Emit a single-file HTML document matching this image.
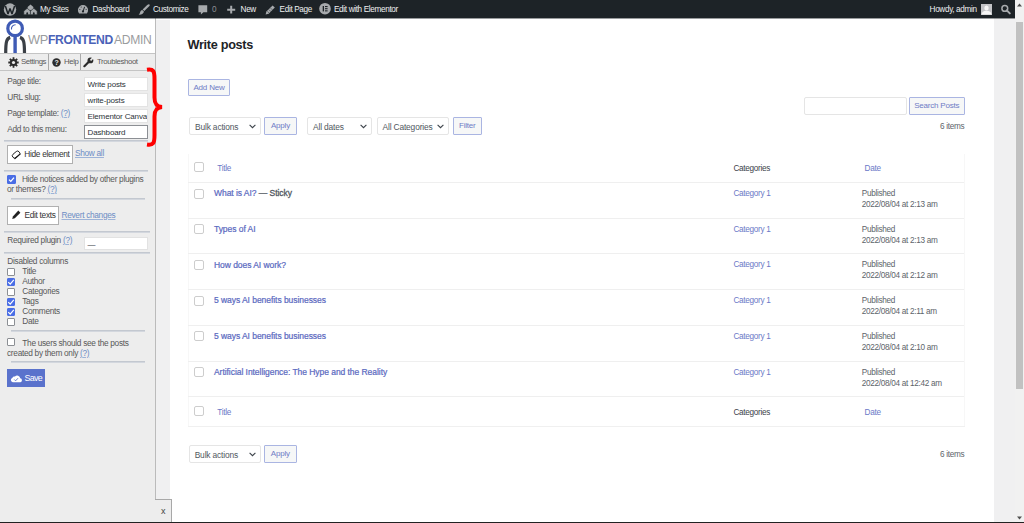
<!DOCTYPE html>
<html><head><meta charset="utf-8">
<style>
*{box-sizing:border-box}
html,body{margin:0;padding:0}
body{width:1024px;height:523px;overflow:hidden;position:relative;background:#f0f0f1;font-family:"Liberation Sans",sans-serif;color:#3c434a}
.a{position:absolute;white-space:nowrap}
#bar{left:0;top:0;width:1015px;height:18px;background:#1d2327;color:#eeeff0;font-size:8.2px;letter-spacing:-0.35px}
#bar .t{top:4.8px;line-height:9px}
#sb{left:1015px;top:0;width:9px;height:522px;background:#f1f1f1}
#bot{left:0;top:522px;width:1024px;height:1px;background:#222}
#side{left:0;top:18px;width:156px;height:504px;background:#ededed;border-right:1px solid #bbb;font-size:8.3px;letter-spacing:-0.3px;color:#585858}
#content{left:170px;top:18px;width:824px;height:504px;background:#fff}
.sep{position:absolute;height:2px;background:linear-gradient(#c3c8d0 50%,#d3d7de 50%)}
.inp{position:absolute;background:#fff;border:1px solid #e3e3e3;font-size:8px;letter-spacing:-0.15px;padding-left:3px;padding-top:1px;line-height:12px;color:#2c3338}
.cb{position:absolute;width:8px;height:8px;border:1px solid #8c8f94;background:#fff;border-radius:1px}
.cbc{background:#4a6de5;border-color:#4a6de5}
.lnk{color:#6c8cc4;text-decoration:underline;text-decoration-color:#9db3d8;text-decoration-thickness:0.7px;text-underline-offset:1px}
.btn{position:absolute;background:#fff;border:1px solid #b0b0b0}
#main{font-size:8.2px;letter-spacing:-0.3px;color:#5d646a}
.mbtn{position:absolute;background:#f6f7f7;border:1px solid #aab5e2;color:#6f7cc6;text-align:center;font-size:8px;letter-spacing:-0.2px;border-radius:1px;padding-top:1px}
.sel{position:absolute;background:#fff;border:1px solid #e5e5e5;border-radius:2px;font-size:8.4px;letter-spacing:-0.15px;color:#50575e}
.row{position:absolute;left:188px;width:776px;border-top:1px solid #efefef}
.tt{color:#5b6abf;font-weight:400;font-size:8.5px;letter-spacing:-0.05px;-webkit-text-stroke:0.22px #5b6abf}
.cat{color:#6b79c7}
.tcb{position:absolute;width:10px;height:10px;border:1px solid #cdcdcd;border-radius:2px;background:#fff}
</style></head><body>

<!-- admin bar -->
<div id="bar" class="a">
  <svg class="a" style="left:0;top:0" width="420" height="18" viewBox="0 0 420 18">
    <g fill="#a7aaad">
      <circle cx="10" cy="9.55" r="6.2"/>
      <path d="M5.4 6L8 14 10 8.4 12 14 14.6 6" fill="none" stroke="#1d2327" stroke-width="1.5" stroke-linejoin="bevel"/>
      <path d="M30.5 4.5L33.4 7.1V10H27.6V7.1z"/>
      <path d="M27.2 8.3L30.6 11.1V14.7H23.8V11.1z" stroke="#1d2327" stroke-width="0.6"/>
      <path d="M33.8 8.3L37.2 11.1V14.7H30.4V11.1z" stroke="#1d2327" stroke-width="0.6"/>
      <path d="M26.3 14.8V13.2A0.9 0.9 0 0 1 28.1 13.2V14.8zM32.9 14.8V13.2A0.9 0.9 0 0 1 34.7 13.2V14.8z" fill="#1d2327"/>
      <path d="M79.1 13.4A5.1 5.1 0 1 1 86.9 13.4z"/>
      <path d="M83 11.6L84.6 6.8" stroke="#1d2327" stroke-width="1"/>
      <circle cx="83" cy="11.4" r="1.1" fill="#1d2327"/>
      <circle cx="79.9" cy="9.6" r="0.5" fill="#1d2327"/><circle cx="81.2" cy="7" r="0.5" fill="#1d2327"/><circle cx="86.1" cy="9.6" r="0.5" fill="#1d2327"/>
      <path d="M149.4 4.4C150.1 4.9 149.7 5.8 148.9 6.6L144.3 11.1 142.6 9.6 147.2 5C148 4.3 148.9 4 149.4 4.4z"/>
      <path d="M142.2 10.1L143.9 11.6C143.7 13.5 141.9 14.9 138.6 14.7 139.6 13.9 139.8 12.9 140.2 11.9 140.6 11 141.3 10.3 142.2 10.1z"/>
      <path d="M198.4 5.3h8.8v7h-3.8l-2.5 2.3v-2.3h-2.5z"/>
      <path d="M230.2 5.7h2v3h3v2h-3v2.9h-2v-2.9h-3v-2h3z"/>
      <path d="M272.6 5.4l2.2 2.2-6.1 6.1-3.1.8.8-3.1z"/>
      <path d="M267.4 11.3l1.8 1.8M269 9.7l1.8 1.8M270.6 8.1l1.8 1.8" stroke="#1d2327" stroke-width="0.5"/>
      <circle cx="325" cy="8.7" r="5.8"/>
      <rect x="322.7" y="6" width="1.3" height="5.4" fill="#1d2327"/>
      <rect x="325" y="6" width="2.6" height="1.1" fill="#1d2327"/><rect x="325" y="8.15" width="2.6" height="1.1" fill="#1d2327"/><rect x="325" y="10.3" width="2.6" height="1.1" fill="#1d2327"/>
    </g>
  </svg>
  <span class="a t" style="left:40px">My Sites</span>
  <span class="a t" style="left:92.5px">Dashboard</span>
  <span class="a t" style="left:153px">Customize</span>
  <span class="a t" style="left:212px;color:#8c8f94">0</span>
  <span class="a t" style="left:240.6px">New</span>
  <span class="a t" style="left:279.6px">Edit Page</span>
  <span class="a t" style="left:334px">Edit with Elementor</span>
  <span class="a t" style="left:929.6px">Howdy, admin</span>
  <div class="a" style="left:981px;top:4px;width:11px;height:10.5px;background:#c3c4c7;overflow:hidden"><svg width="11" height="10.5" viewBox="0 0 11 10.5"><ellipse cx="5.5" cy="4" rx="2.2" ry="2.5" fill="#f6f6f6"/><path d="M0.5 10.5c0-2.3 2-3.7 5-3.7s5 1.4 5 3.7z" fill="#f6f6f6"/></svg></div>
  <svg class="a" style="left:1000px;top:4px" width="12" height="11" viewBox="0 0 12 11"><circle cx="4.8" cy="4.4" r="2.9" fill="none" stroke="#a7aaad" stroke-width="1.5"/><path d="M6.8 6.4l3 3" stroke="#a7aaad" stroke-width="2" stroke-linecap="round"/></svg>
</div>

<!-- scrollbar -->
<div id="sb" class="a">
  <svg class="a" style="left:2px;top:3px" width="5" height="4" viewBox="0 0 5 4"><path d="M0 3.5L2.5 0.5 5 3.5z" fill="#505050"/></svg>
  <div class="a" style="left:1px;top:22px;width:7px;height:367px;background:#c1c1c1"></div>
  <svg class="a" style="left:2px;top:516px" width="5" height="4" viewBox="0 0 5 4"><path d="M0 0.5L2.5 3.5 5 0.5z" fill="#505050"/></svg>
</div>

<!-- sidebar -->
<div id="side" class="a">
  <div class="a" style="left:0;top:0;width:155px;height:35.5px;background:#fff"></div>
  <svg class="a" style="left:3px;top:1px" width="25" height="35" viewBox="0 0 25 35">
    <circle cx="12.1" cy="9.4" r="7.3" fill="none" stroke="#3f5bb5" stroke-width="3.2"/>
    <path d="M8.5 10.5A4 4 0 0 1 12.6 5.8" fill="none" stroke="#3f5bb5" stroke-width="1.1"/>
    <rect x="10.4" y="16" width="3.4" height="18.4" fill="#3f5bb5"/>
    <path d="M7.2 18.4C3.6 19.4 2.7 22.5 2.7 34.4" fill="none" stroke="#3b4046" stroke-width="3.2"/>
    <path d="M17 18.4C20.6 19.4 21.5 22.5 21.5 34.4" fill="none" stroke="#3b4046" stroke-width="3.2"/>
  </svg>
  <span class="a" style="left:28px;top:15.5px;font-size:12.3px;line-height:13px;color:#9a9c9e;transform-origin:0 0;transform:scaleX(1.04)">WP</span><span class="a" style="left:48.4px;top:15.5px;font-size:12.3px;line-height:13px;color:#4a62b8;font-weight:700;transform-origin:0 0;transform:scaleX(0.985)">FRONTEND</span><span class="a" style="left:113.6px;top:15.5px;font-size:12.3px;line-height:13px;color:#9a9c9e;transform-origin:0 0;transform:scaleX(0.985)">ADMIN</span>
  <!-- tabs -->
  <div class="a" style="left:0;top:35px;width:155px;height:1px;background:#c4c4c4"></div>
  <div class="a" style="left:48px;top:36px;width:1px;height:17px;background:#a9a9a9"></div>
  <div class="a" style="left:80px;top:36px;width:1px;height:17px;background:#a9a9a9"></div>
  <svg class="a" style="left:7.5px;top:39px" width="11" height="11" viewBox="0 0 11 11"><g fill="#2c2c2c"><circle cx="5.5" cy="5.5" r="3.6"/><g stroke="#2c2c2c" stroke-width="1.8"><path d="M5.5 0.3v10.4M0.3 5.5h10.4M1.8 1.8l7.4 7.4M9.2 1.8l-7.4 7.4"/></g></g><circle cx="5.5" cy="5.5" r="1.6" fill="#ededed"/></svg>
  <span class="a" style="left:21px;top:39px;font-size:7.8px;letter-spacing:-0.38px;line-height:9px;color:#5a5a5a">Settings</span>
  <svg class="a" style="left:51.6px;top:39.5px" width="9" height="9" viewBox="0 0 9 9"><circle cx="4.5" cy="4.5" r="4.2" fill="#2c2c2c"/><text x="4.5" y="7.3" font-size="7" font-weight="700" font-family="Liberation Sans" text-anchor="middle" fill="#ededed">?</text></svg>
  <span class="a" style="left:64px;top:39px;font-size:7.8px;letter-spacing:-0.38px;line-height:9px;color:#5a5a5a">Help</span>
  <svg class="a" style="left:83px;top:38.5px" width="11" height="11" viewBox="0 0 11 11"><path d="M1.4 9.2L5.6 5" stroke="#2c2c2c" stroke-width="2.2" stroke-linecap="round"/><circle cx="7.4" cy="3.4" r="2.9" fill="#2c2c2c"/><path d="M6.9 2.7L8.1 3.9 11.2 0.8 10 -0.4z" fill="#ededed"/></svg>
  <span class="a" style="left:97px;top:39px;font-size:7.8px;letter-spacing:-0.38px;line-height:9px;color:#5a5a5a">Troubleshoot</span>
  <div class="a" style="left:0;top:52px;width:155px;height:1px;background:#c4c4c4"></div>

  <!-- form rows -->
  <span class="a" style="left:7.2px;top:59px;line-height:9px">Page title:</span>
  <span class="a" style="left:7.2px;top:75px;line-height:9px">URL slug:</span>
  <span class="a" style="left:7.2px;top:90.5px;line-height:9px">Page template: <span class="lnk">(?)</span></span>
  <span class="a" style="left:7.2px;top:106.5px;line-height:9px">Add to this menu:</span>
  <div class="inp" style="left:83.5px;top:59px;width:64px;height:13.5px">Write posts</div>
  <div class="inp" style="left:83.5px;top:75px;width:64px;height:13.5px">write-posts</div>
  <div class="inp" style="left:83.5px;top:91px;width:64px;height:14px;overflow:hidden">Elementor Canvas</div>
  <div class="inp" style="left:83.5px;top:106.5px;width:64px;height:14.5px;border-color:#8c8f94">Dashboard</div>
  <div class="sep" style="left:4px;top:121.5px;width:144px"></div>

  <div class="btn" style="left:7px;top:127px;width:66px;height:19px"></div>
  <svg class="a" style="left:10px;top:131px" width="12" height="12" viewBox="0 0 12 12"><g transform="rotate(-40 6 5.5)"><rect x="1.9" y="3.4" width="8.2" height="4.4" rx="2" fill="#fff" stroke="#1a1a1a" stroke-width="0.9"/><path d="M2.6 7.9h6.8" stroke="#1a1a1a" stroke-width="1.2" stroke-linecap="round"/></g></svg>
  <span class="a" style="left:24.3px;top:132px;line-height:9px;color:#333">Hide element</span>
  <span class="a lnk" style="left:75px;top:131px;line-height:9px">Show all</span>
  <div class="sep" style="left:4px;top:151.5px;width:144px"></div>

  <div class="cb cbc" style="left:7px;top:157px;width:8.5px;height:8.5px"></div>
  <svg class="a" style="left:8px;top:158px" width="7" height="7" viewBox="0 0 7 7"><path d="M1 3.6l1.8 1.8L6 1.6" fill="none" stroke="#fff" stroke-width="1.3"/></svg>
  <span class="a" style="left:21.9px;top:157px;line-height:9px">Hide notices added by other plugins</span>
  <span class="a" style="left:7px;top:167px;line-height:9px">or themes? <span class="lnk">(?)</span></span>
  <div class="sep" style="left:11px;top:180px;width:133.5px"></div>

  <div class="btn" style="left:7px;top:188px;width:52px;height:19px"></div>
  <svg class="a" style="left:11.5px;top:192px" width="9" height="10" viewBox="0 0 9 10"><path d="M6.3 0.6l2.1 2.1-5.6 5.6-2.6.7.7-2.6z" fill="#222"/></svg>
  <span class="a" style="left:24.5px;top:193px;line-height:9px;color:#333">Edit texts</span>
  <span class="a lnk" style="left:61.5px;top:192.5px;line-height:9px">Revert changes</span>
  <div class="sep" style="left:4px;top:212.5px;width:146px"></div>

  <span class="a" style="left:7.3px;top:218px;line-height:9px">Required plugin <span class="lnk">(?)</span></span>
  <div class="inp" style="left:83.5px;top:218.5px;width:64px;height:13.5px;border-color:#e2e2e2">—</div>
  <div class="sep" style="left:4px;top:233.5px;width:146px"></div>

  <span class="a" style="left:7.3px;top:239px;line-height:9px">Disabled columns</span>
  <div class="cb" style="left:7.2px;top:249.5px"></div><span class="a" style="left:22.2px;top:249px;line-height:9px">Title</span>
  <div class="cb cbc" style="left:7.2px;top:259.5px"></div><svg class="a" style="left:7.2px;top:259.8px" width="8" height="8" viewBox="0 0 8 8"><path d="M1.3 4.2l1.9 1.9L6.8 1.9" fill="none" stroke="#fff" stroke-width="1.2"/></svg><span class="a" style="left:22.2px;top:259px;line-height:9px">Author</span>
  <div class="cb" style="left:7.2px;top:269.5px"></div><span class="a" style="left:22.2px;top:269px;line-height:9px">Categories</span>
  <div class="cb cbc" style="left:7.2px;top:279.5px"></div><svg class="a" style="left:7.2px;top:279.8px" width="8" height="8" viewBox="0 0 8 8"><path d="M1.3 4.2l1.9 1.9L6.8 1.9" fill="none" stroke="#fff" stroke-width="1.2"/></svg><span class="a" style="left:22.2px;top:279px;line-height:9px">Tags</span>
  <div class="cb cbc" style="left:7.2px;top:289.5px"></div><svg class="a" style="left:7.2px;top:289.8px" width="8" height="8" viewBox="0 0 8 8"><path d="M1.3 4.2l1.9 1.9L6.8 1.9" fill="none" stroke="#fff" stroke-width="1.2"/></svg><span class="a" style="left:22.2px;top:289px;line-height:9px">Comments</span>
  <div class="cb" style="left:7.2px;top:299.5px"></div><span class="a" style="left:22.2px;top:299px;line-height:9px">Date</span>
  <div class="sep" style="left:11px;top:312px;width:133.5px"></div>

  <div class="cb" style="left:7.3px;top:320px"></div>
  <span class="a" style="left:22.3px;top:320.8px;line-height:9px">The users should see the posts</span>
  <span class="a" style="left:7px;top:330.8px;line-height:9px">created by them only <span class="lnk">(?)</span></span>
  <div class="sep" style="left:11px;top:343px;width:133.5px"></div>

  <div class="a" style="left:7px;top:351px;width:38px;height:18.2px;background:#5a72cc"></div>
  <svg class="a" style="left:10px;top:356px" width="12" height="9" viewBox="0 0 12 9"><path d="M2.8 8.3A2.3 2.3 0 0 1 2.3 3.9 2.4 2.4 0 0 1 5 2.6 3 3 0 0 1 10.2 4.3 2 2 0 0 1 9.5 8.3z" fill="#fff"/><path d="M4.3 5.5l1.3 1.3 2.4-2.6" fill="none" stroke="#5a72cc" stroke-width="0.9"/></svg>
  <span class="a" style="left:24.6px;top:355.5px;line-height:9px;color:#fff;font-size:8.9px;letter-spacing:-0.75px">Save</span>
</div>
<!-- content -->
<div id="content" class="a"></div>
<div id="main">
  <span class="a" style="left:187.5px;top:36.6px;font-size:12.7px;line-height:16px;font-weight:700;color:#1d2327">Write posts</span>
  <div class="mbtn" style="left:188px;top:79px;width:42px;height:16.5px;line-height:14.5px">Add New</div>
  <div class="sel" style="left:189px;top:117px;width:72px;height:18px"><span class="a" style="left:5px;top:3.5px;line-height:10px">Bulk actions</span><svg class="a" style="right:4px;top:6px" width="7" height="5" viewBox="0 0 7 5"><path d="M0.6 0.8L3.5 3.7 6.4 0.8" fill="none" stroke="#3c434a" stroke-width="1.1"/></svg></div>
  <div class="mbtn" style="left:264px;top:117px;width:33px;height:18px;line-height:14.5px">Apply</div>
  <div class="sel" style="left:307px;top:117px;width:65px;height:18px"><span class="a" style="left:5px;top:3.5px;line-height:10px">All dates</span><svg class="a" style="right:4px;top:6px" width="7" height="5" viewBox="0 0 7 5"><path d="M0.6 0.8L3.5 3.7 6.4 0.8" fill="none" stroke="#3c434a" stroke-width="1.1"/></svg></div>
  <div class="sel" style="left:376.5px;top:117px;width:72px;height:18px"><span class="a" style="left:5px;top:3.5px;line-height:10px">All Categories</span><svg class="a" style="right:4px;top:6px" width="7" height="5" viewBox="0 0 7 5"><path d="M0.6 0.8L3.5 3.7 6.4 0.8" fill="none" stroke="#3c434a" stroke-width="1.1"/></svg></div>
  <div class="mbtn" style="left:452.5px;top:117px;width:29.5px;height:18px;line-height:14.5px">Filter</div>
  <div class="sel" style="left:803.5px;top:97px;width:103px;height:17.5px"></div>
  <div class="mbtn" style="left:909px;top:97px;width:55.5px;height:17.5px;line-height:13.5px">Search Posts</div>
  <span class="a" style="left:940px;top:122px;line-height:10px">6 items</span>
  <div class="a" style="left:188px;top:154px;width:776.5px;height:272px;border:1px solid #f7f7f7;border-top:0;border-bottom:0"></div>
  <div class="tcb" style="left:194px;top:162px"></div>
  <span class="a cat" style="left:217.3px;top:164px;line-height:10px">Title</span>
  <span class="a" style="left:733.4px;top:164px;line-height:10px;color:#3c434a">Categories</span>
  <span class="a cat" style="left:864.6px;top:164px;line-height:10px">Date</span>
  <div class="row" style="top:182px;height:36px"></div>
  <div class="tcb" style="left:194px;top:188.5px"></div>
  <span class="a tt" style="left:214px;top:188.2px;line-height:10px">What is AI?<span style="color:#50575e;-webkit-text-stroke:0.3px #50575e"> — Sticky</span></span>
  <span class="a cat" style="left:733.4px;top:189px;line-height:10px">Category 1</span>
  <span class="a" style="left:861.8px;top:189px;line-height:10px">Published</span>
  <span class="a" style="left:861.8px;top:200px;line-height:10px">2022/08/04 at 2:13 am</span>
  <div class="row" style="top:217.7px;height:36px"></div>
  <div class="tcb" style="left:194px;top:224.2px"></div>
  <span class="a tt" style="left:214px;top:223.9px;line-height:10px">Types of AI<span style="color:#50575e"></span></span>
  <span class="a cat" style="left:733.4px;top:224.7px;line-height:10px">Category 1</span>
  <span class="a" style="left:861.8px;top:224.7px;line-height:10px">Published</span>
  <span class="a" style="left:861.8px;top:235.7px;line-height:10px">2022/08/04 at 2:13 am</span>
  <div class="row" style="top:253.4px;height:36px"></div>
  <div class="tcb" style="left:194px;top:259.9px"></div>
  <span class="a tt" style="left:214px;top:259.6px;line-height:10px">How does AI work?<span style="color:#50575e"></span></span>
  <span class="a cat" style="left:733.4px;top:260.4px;line-height:10px">Category 1</span>
  <span class="a" style="left:861.8px;top:260.4px;line-height:10px">Published</span>
  <span class="a" style="left:861.8px;top:271.4px;line-height:10px">2022/08/04 at 2:12 am</span>
  <div class="row" style="top:289.1px;height:36px"></div>
  <div class="tcb" style="left:194px;top:295.6px"></div>
  <span class="a tt" style="left:214px;top:295.3px;line-height:10px">5 ways AI benefits businesses<span style="color:#50575e"></span></span>
  <span class="a cat" style="left:733.4px;top:296.1px;line-height:10px">Category 1</span>
  <span class="a" style="left:861.8px;top:296.1px;line-height:10px">Published</span>
  <span class="a" style="left:861.8px;top:307.1px;line-height:10px">2022/08/04 at 2:11 am</span>
  <div class="row" style="top:324.8px;height:36px"></div>
  <div class="tcb" style="left:194px;top:331.3px"></div>
  <span class="a tt" style="left:214px;top:331.0px;line-height:10px">5 ways AI benefits businesses<span style="color:#50575e"></span></span>
  <span class="a cat" style="left:733.4px;top:331.8px;line-height:10px">Category 1</span>
  <span class="a" style="left:861.8px;top:331.8px;line-height:10px">Published</span>
  <span class="a" style="left:861.8px;top:342.8px;line-height:10px">2022/08/04 at 2:10 am</span>
  <div class="row" style="top:360.5px;height:36px"></div>
  <div class="tcb" style="left:194px;top:367.0px"></div>
  <span class="a tt" style="left:214px;top:366.7px;line-height:10px">Artificial Intelligence: The Hype and the Reality<span style="color:#50575e"></span></span>
  <span class="a cat" style="left:733.4px;top:367.5px;line-height:10px">Category 1</span>
  <span class="a" style="left:861.8px;top:367.5px;line-height:10px">Published</span>
  <span class="a" style="left:861.8px;top:378.5px;line-height:10px">2022/08/04 at 12:42 am</span>
  <div class="row" style="top:396px;height:30px"></div>
  <div class="tcb" style="left:194px;top:405.5px"></div>
  <span class="a cat" style="left:217.3px;top:408px;line-height:10px">Title</span>
  <span class="a" style="left:733.4px;top:408px;line-height:10px;color:#3c434a">Categories</span>
  <span class="a cat" style="left:864.6px;top:408px;line-height:10px">Date</span>
  <div class="a" style="left:188px;top:425.5px;width:776.5px;height:1px;background:#f0f0f0"></div>
  <div class="sel" style="left:188.7px;top:445px;width:72px;height:18px"><span class="a" style="left:5px;top:3.5px;line-height:10px">Bulk actions</span><svg class="a" style="right:4px;top:6px" width="7" height="5" viewBox="0 0 7 5"><path d="M0.6 0.8L3.5 3.7 6.4 0.8" fill="none" stroke="#3c434a" stroke-width="1.1"/></svg></div>
  <div class="mbtn" style="left:263.8px;top:445px;width:33px;height:18px;line-height:14.5px">Apply</div>
  <span class="a" style="left:940px;top:449.5px;line-height:10px">6 items</span>
</div>

<div class="a" style="left:155px;top:499px;width:17px;height:23px;background:#ededed;border-top:1px solid #a8a8a8;border-right:1px solid #a8a8a8"></div>
<span class="a" style="left:161px;top:505.5px;font-size:9px;line-height:10px;color:#444">x</span>
<!-- brace -->
<svg class="a" style="left:145px;top:66px" width="20" height="82" viewBox="0 0 20 82">
  <path d="M2 3.8C8.5 2.8 9.5 5 9.5 13V31.5C9.5 37 11 40.5 17 41C11 41.5 9.5 45 9.5 50.5V69C9.5 77 8.5 79.5 2 78.5" fill="none" stroke="#f00" stroke-width="4" stroke-linejoin="miter"/>
</svg>

<div class="a" style="left:156px;top:18px;width:14px;height:2px;background:#fff"></div>
<div class="a" style="left:0;top:18px;width:1015px;height:1px;background:rgba(29,35,39,0.45)"></div>
<div id="bot" class="a"></div>
</body></html>
